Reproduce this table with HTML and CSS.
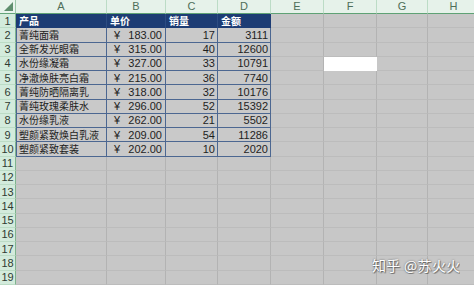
FILE: index.html
```html
<!DOCTYPE html>
<html lang="zh">
<head>
<meta charset="utf-8">
<link rel="stylesheet" href="styles.css">
</head>
<body>
<div class="sheet">
  <div class="corner"><span class="tri"></span></div>
  <div class="ch">A</div><div class="ch">B</div><div class="ch">C</div><div class="ch">D</div><div class="ch">E</div><div class="ch">F</div><div class="ch">G</div><div class="ch">H</div>

  <div class="rh">1</div>
  <div class="th">产品</div><div class="th">单价</div><div class="th">销量</div><div class="th last">金额</div>
  <div class="g"></div><div class="g"></div><div class="g"></div><div class="g"></div>

  <div class="rh">2</div>
  <div class="td a">菁纯面霜</div><div class="td b"><span>¥</span><span>183.00</span></div><div class="td n">17</div><div class="td n">3111</div>
  <div class="g"></div><div class="g"></div><div class="g"></div><div class="g"></div>

  <div class="rh">3</div>
  <div class="td a">全新发光眼霜</div><div class="td b"><span>¥</span><span>315.00</span></div><div class="td n">40</div><div class="td n">12600</div>
  <div class="g"></div><div class="g"></div><div class="g"></div><div class="g"></div>

  <div class="rh">4</div>
  <div class="td a">水份缘凝霜</div><div class="td b"><span>¥</span><span>327.00</span></div><div class="td n">33</div><div class="td n">10791</div>
  <div class="g"></div><div class="g white"></div><div class="g"></div><div class="g"></div>

  <div class="rh">5</div>
  <div class="td a">净澈焕肤亮白霜</div><div class="td b"><span>¥</span><span>215.00</span></div><div class="td n">36</div><div class="td n">7740</div>
  <div class="g"></div><div class="g"></div><div class="g"></div><div class="g"></div>

  <div class="rh">6</div>
  <div class="td a">菁纯防晒隔离乳</div><div class="td b"><span>¥</span><span>318.00</span></div><div class="td n">32</div><div class="td n">10176</div>
  <div class="g"></div><div class="g"></div><div class="g"></div><div class="g"></div>

  <div class="rh">7</div>
  <div class="td a">菁纯玫瑰柔肤水</div><div class="td b"><span>¥</span><span>296.00</span></div><div class="td n">52</div><div class="td n">15392</div>
  <div class="g"></div><div class="g"></div><div class="g"></div><div class="g"></div>

  <div class="rh">8</div>
  <div class="td a">水份缘乳液</div><div class="td b"><span>¥</span><span>262.00</span></div><div class="td n">21</div><div class="td n">5502</div>
  <div class="g"></div><div class="g"></div><div class="g"></div><div class="g"></div>

  <div class="rh">9</div>
  <div class="td a">塑颜紧致焕白乳液</div><div class="td b"><span>¥</span><span>209.00</span></div><div class="td n">54</div><div class="td n">11286</div>
  <div class="g"></div><div class="g"></div><div class="g"></div><div class="g"></div>

  <div class="rh">10</div>
  <div class="td a">塑颜紧致套装</div><div class="td b"><span>¥</span><span>202.00</span></div><div class="td n">10</div><div class="td n">2020</div>
  <div class="g"></div><div class="g"></div><div class="g"></div><div class="g"></div>

  <div class="rh">11</div><div class="g"></div><div class="g"></div><div class="g"></div><div class="g"></div><div class="g"></div><div class="g"></div><div class="g"></div><div class="g"></div>
  <div class="rh">12</div><div class="g"></div><div class="g"></div><div class="g"></div><div class="g"></div><div class="g"></div><div class="g"></div><div class="g"></div><div class="g"></div>
  <div class="rh">13</div><div class="g"></div><div class="g"></div><div class="g"></div><div class="g"></div><div class="g"></div><div class="g"></div><div class="g"></div><div class="g"></div>
  <div class="rh">14</div><div class="g"></div><div class="g"></div><div class="g"></div><div class="g"></div><div class="g"></div><div class="g"></div><div class="g"></div><div class="g"></div>
  <div class="rh">15</div><div class="g"></div><div class="g"></div><div class="g"></div><div class="g"></div><div class="g"></div><div class="g"></div><div class="g"></div><div class="g"></div>
  <div class="rh">16</div><div class="g"></div><div class="g"></div><div class="g"></div><div class="g"></div><div class="g"></div><div class="g"></div><div class="g"></div><div class="g"></div>
  <div class="rh">17</div><div class="g"></div><div class="g"></div><div class="g"></div><div class="g"></div><div class="g"></div><div class="g"></div><div class="g"></div><div class="g"></div>
  <div class="rh">18</div><div class="g"></div><div class="g"></div><div class="g"></div><div class="g"></div><div class="g"></div><div class="g"></div><div class="g"></div><div class="g"></div>
  <div class="rh">19</div><div class="g"></div><div class="g"></div><div class="g"></div><div class="g"></div><div class="g"></div><div class="g"></div><div class="g"></div><div class="g"></div>

  <div class="mark">知乎 @苏火火</div>
</div>
</body>
</html>
```

FILE: styles.css
```css
* { box-sizing: border-box; }
html, body {
  margin: 0;
  padding: 0;
  width: 474px;
  height: 285px;
  overflow: hidden;
  background: #c7c7c7;
}
.sheet {
  position: relative;
  display: grid;
  grid-template-columns: 16px 91px 59px 52px 53px 53px 53px 51px 52px;
  grid-template-rows: 14px repeat(19, 14.26px);
  font-family: "Liberation Sans", "Noto Sans CJK SC", sans-serif;
  font-size: 11px;
  line-height: 12px;
  color: #1e1e1e;
}
.sheet > div {
  min-width: 0;
  overflow: hidden;
  white-space: nowrap;
}
.corner {
  position: relative;
  background: #e9f4ed;
  border-bottom: 1px solid #63a57a;
  border-right: 1px solid #9cc8aa;
}
.tri {
  position: absolute;
  right: 2px;
  bottom: 2px;
  width: 0;
  height: 0;
  border-left: 9px solid transparent;
  border-bottom: 9px solid #5f8e6e;
}
.ch {
  background: #e6f2ea;
  border-bottom: 1px solid #5fa275;
  border-right: 1px solid #bcdcc6;
  color: #4e6e58;
  text-align: center;
  line-height: 13px;
  font-size: 11px;
}
.rh {
  background: #d3ebdc;
  border-right: 1px solid #7fb48f;
  border-bottom: 1px solid #bcdcc6;
  color: #2f3b33;
  font-size: 11px;
  display: flex;
  align-items: center;
  justify-content: center;
}
.g {
  background: #c7c7c7;
  border-right: 1px solid #b3b3b3;
  border-bottom: 1px solid #bcbcbc;
}
.g.white {
  background: #ffffff;
  border-color: #ffffff;
}
.th {
  background: #1d3c74;
  color: #ffffff;
  font-family: "Noto Sans CJK SC", sans-serif;
  font-weight: 700;
  font-size: 10px;
  line-height: 12px;
  padding-left: 3px;
  display: flex;
  align-items: center;
  border-right: 1px solid #2d4c82;
}
.th.last {
  border-right: 1px solid #1d3c74;
}
.td {
  background: #c9c9c9;
  border-right: 1px solid #4c6791;
  border-bottom: 1px solid #4c6791;
  display: flex;
  align-items: center;
}
.td.a {
  border-left: 1px solid #4c6791;
  padding-left: 2px;
  font-family: "Noto Sans CJK SC", sans-serif;
  font-size: 10px;
  line-height: 12px;
}
.td.b {
  justify-content: space-between;
  padding: 0 3px 0 7px;
}
.td.n {
  justify-content: flex-end;
  padding-right: 2px;
}
.mark {
  position: absolute;
  left: 372px;
  top: 256px;
  color: #ffffff;
  font-family: "Noto Sans CJK SC", sans-serif;
  font-size: 14px;
  line-height: 18px;
  letter-spacing: 0.3px;
  text-shadow: 0 0 2px rgba(0,0,0,0.55), 1px 1px 1px rgba(0,0,0,0.4);
}
```
